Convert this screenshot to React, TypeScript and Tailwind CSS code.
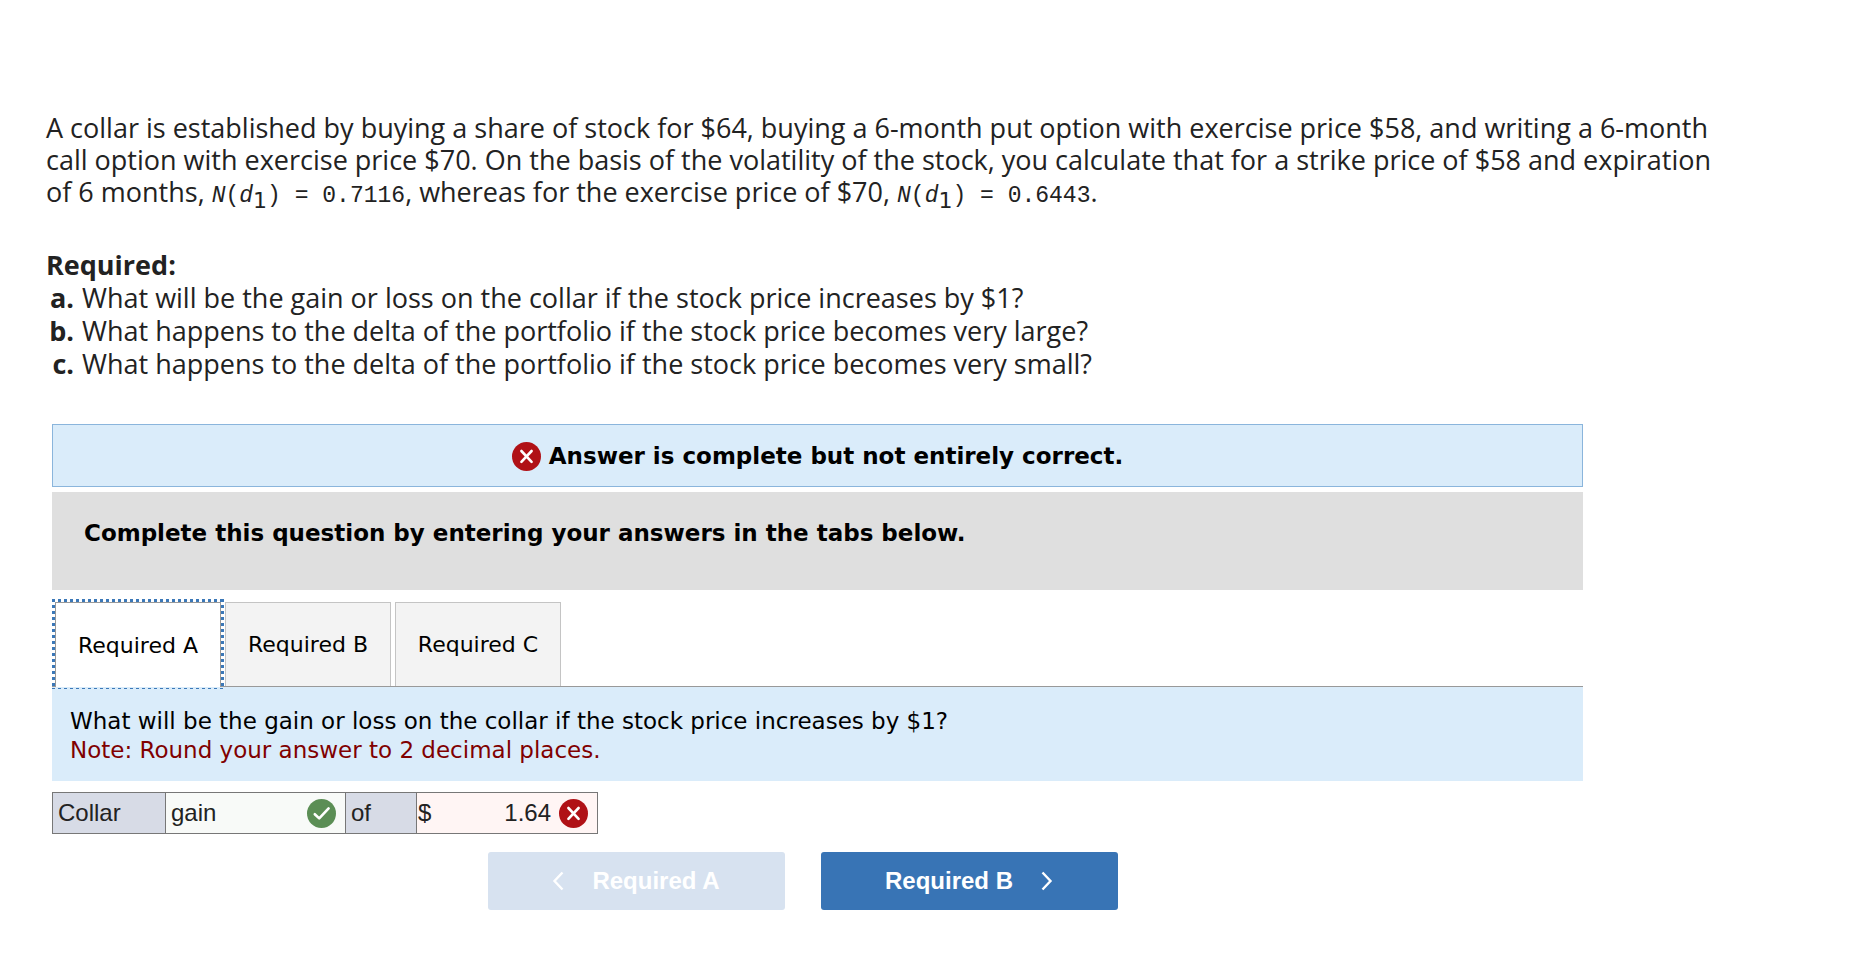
import { useState } from "react";

const questions = [
  { id: "a", text: "What will be the gain or loss on the collar if the stock price increases by $1?" },
  { id: "b", text: "What happens to the delta of the portfolio if the stock price becomes very large?" },
  { id: "c", text: "What happens to the delta of the portfolio if the stock price becomes very small?" },
];

const tabs = ["Required A", "Required B", "Required C"];

function WrongIcon() {
  return (
    <svg width="29" height="29" viewBox="0 0 29 29" className="shrink-0" aria-label="incorrect">
      <circle cx="14.5" cy="14.5" r="14.5" fill="#b01116" />
      <path d="M9.4 9L19.6 19.8M19.6 9L9.4 19.8" stroke="#fff" strokeWidth="2.6" strokeLinecap="round" />
    </svg>
  );
}

function RightIcon() {
  return (
    <svg width="29" height="29" viewBox="0 0 29 29" className="shrink-0" aria-label="correct">
      <circle cx="14.5" cy="14.5" r="14.5" fill="#5b8e55" />
      <path
        d="M7.8 15.2L12.2 19.4L21.6 9.4"
        fill="none"
        stroke="#fff"
        strokeWidth="2.6"
        strokeLinecap="round"
        strokeLinejoin="round"
      />
    </svg>
  );
}

function Formula({ value }: { value: string }) {
  return (
    <span className="font-['Liberation_Mono',monospace] text-[23px] leading-none whitespace-pre">
      <i>N</i>(<i>d</i>
      <sub className="font-['DejaVu_Sans',sans-serif] text-[22px] leading-none">1</sub>) = {value}
    </span>
  );
}

// Dotted focus ring around the selected tab
function FocusRing() {
  return (
    <span aria-hidden="true" className="pointer-events-none absolute -top-1 -right-1 -bottom-0.5 -left-1">
      <span className="absolute inset-x-0 top-0 h-[3px] bg-[repeating-linear-gradient(90deg,#3b78b8_0_3px,#fff_3px_6px)]" />
      <span className="absolute inset-x-0 bottom-0 h-px bg-[repeating-linear-gradient(90deg,#3b78b8_0_3px,transparent_3px_6px)]" />
      <span className="absolute inset-y-0 left-0 w-[3px] bg-[repeating-linear-gradient(180deg,#3b78b8_0_3px,transparent_3px_6px)]" />
      <span className="absolute inset-y-0 right-0 w-[3px] bg-[repeating-linear-gradient(180deg,#3b78b8_0_3px,transparent_3px_6px)]" />
    </span>
  );
}

export default function App() {
  const [active, setActive] = useState<number>(0);
  const [direction, setDirection] = useState<string>("gain");
  const [amount, setAmount] = useState<string>("1.64");

  return (
    <main className="min-h-screen bg-white pt-28 pr-[130px] pb-16 pl-[46px] font-['Open_Sans',sans-serif] text-[27px] text-[#222]">
      <p className="leading-8">
        A collar is established by buying a share of stock for $64, buying a 6-month put option with exercise price
        $58, and writing a 6-month call option with exercise price $70. On the basis of the volatility of the stock,
        you calculate that for a strike price of $58 and expiration of 6 months, <Formula value="0.7116" />, whereas
        for the exercise price of $70, <Formula value="0.6443" />.
      </p>

      <h2 className="mt-10 leading-[33px] font-bold">Required:</h2>
      <ol className="leading-[33px]">
        {questions.map((q) => (
          <li key={q.id} className="flex gap-2">
            <b className="w-7 shrink-0 text-right">{q.id}.</b>
            <span>{q.text}</span>
          </li>
        ))}
      </ol>

      <section className="mt-11 mr-[149px] ml-[6px] font-['DejaVu_Sans',sans-serif] text-[23px] text-black">
        <div className="flex items-center justify-center gap-2 border border-[#8ab5dc] bg-[#daecfa] pt-[17px] pb-[15px] leading-[29px] font-bold">
          <WrongIcon />
          <span>Answer is complete but not entirely correct.</span>
        </div>

        <div className="mt-[5px] bg-[#dfdfdf] px-8 pt-[27px] pb-[42px] leading-[29px] font-bold">
          Complete this question by entering your answers in the tabs below.
        </div>

        <div role="tablist" className="mt-3 flex gap-1 border-b border-[#999] pl-[3px]">
          {tabs.map((tab, i) => (
            <button
              key={tab}
              type="button"
              role="tab"
              aria-selected={active === i}
              onClick={() => setActive(i)}
              className={
                active === i
                  ? "relative -mb-px h-[85px] w-[166px] border border-b-0 border-[#999] bg-white text-[22px]"
                  : "h-[84px] w-[166px] border border-b-0 border-[#c4c4c4] bg-[#f3f3f3] text-[22px]"
              }
            >
              {tab}
              {active === i && <FocusRing />}
            </button>
          ))}
        </div>

        <div className="bg-[#daecfa] px-[18px] pt-5 pb-4 leading-[29px]">
          <p>{questions[active].text}</p>
          <p className="text-[#800000]">Note: Round your answer to 2 decimal places.</p>
        </div>

        <table className="mt-[11px] border-collapse font-['Liberation_Sans',sans-serif] text-2xl text-[#222]">
          <tbody>
            <tr className="h-[41px]">
              <th scope="row" className="w-[113px] border border-[#777] bg-[#d7dbe6] px-[5px] text-left font-normal">
                Collar
              </th>
              <td className="w-[180px] border border-[#777] bg-[#f8faf8] pr-[9px] pl-[5px]">
                <div className="flex items-center">
                  <select
                    aria-label="Gain or loss"
                    value={direction}
                    onChange={(e) => setDirection(e.target.value)}
                    className="min-w-0 flex-1 appearance-none bg-transparent outline-none"
                  >
                    <option value="gain">gain</option>
                    <option value="loss">loss</option>
                  </select>
                  <RightIcon />
                </div>
              </td>
              <td className="w-[71px] border border-[#777] bg-[#d7dbe6] px-[5px]">of</td>
              <td className="w-[181px] border border-[#777] bg-[#fff5f4] pr-[9px] pl-px">
                <div className="flex items-center">
                  <span>$</span>
                  <input
                    type="text"
                    aria-label="Amount"
                    value={amount}
                    onChange={(e) => setAmount(e.target.value)}
                    className="mr-2 w-0 flex-1 bg-transparent text-right outline-none"
                  />
                  <WrongIcon />
                </div>
              </td>
            </tr>
          </tbody>
        </table>

        <div className="mt-[18px] flex justify-center gap-9 pr-[30px] font-['Liberation_Sans',sans-serif] text-2xl font-bold text-white">
          <button
            type="button"
            disabled
            className="flex h-[58px] w-[297px] items-center justify-center gap-7 rounded-[3px] bg-[#d7e2f0]"
          >
            <svg width="12" height="20" viewBox="0 0 12 20" fill="none" stroke="currentColor" strokeWidth="2.4">
              <path d="M10.5 1.5L2.5 10L10.5 18.5" />
            </svg>
            Required A
          </button>
          <button
            type="button"
            onClick={() => setActive(1)}
            className="flex h-[58px] w-[297px] items-center justify-center gap-7 rounded-[3px] bg-[#3874b5]"
          >
            Required B
            <svg width="12" height="20" viewBox="0 0 12 20" fill="none" stroke="currentColor" strokeWidth="2.4">
              <path d="M1.5 1.5L9.5 10L1.5 18.5" />
            </svg>
          </button>
        </div>
      </section>
    </main>
  );
}
